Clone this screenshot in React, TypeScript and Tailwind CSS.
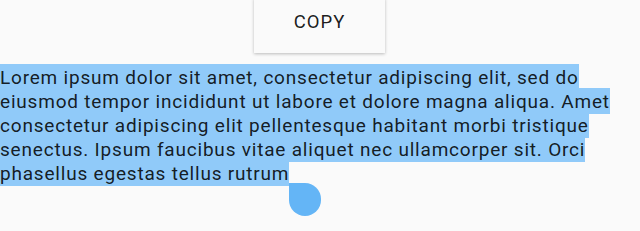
export default function App() {
  const text =
    'Lorem ipsum dolor sit amet, consectetur adipiscing elit, sed do eiusmod tempor incididunt ut labore et dolore magna aliqua. Amet consectetur adipiscing elit pellentesque habitant morbi tristique senectus. Ipsum faucibus vitae aliquet nec ullamcorper sit. Orci phasellus egestas tellus rutrum';

  return (
    <div className="w-[640px] h-[231px] bg-[#fafafa] overflow-hidden" style={{ fontFamily: 'Roboto, sans-serif' }}>
      <div className="flex">
        <div className="ml-[254px] w-[131px] h-[55px] mt-[-2px] flex items-center justify-center bg-[#fafafa] shadow-[0_1px_3px_rgba(0,0,0,0.25)]">
          <span className="text-[18.5px] text-black/90 tracking-[1px] mb-[6px]">COPY</span>
        </div>
      </div>
      <div className="mt-[12px] relative">
        <p className="text-[19px] leading-[24px] tracking-[0.8px] text-black/87">
          <span className="bg-[#90caf9] py-[1.5px]">{text}</span>
        </p>
        <div className="absolute left-[289px] top-[118px] w-[32px] h-[33px] bg-[#64b5f6] rounded-full rounded-tl-none" />
      </div>
    </div>
  );
}
